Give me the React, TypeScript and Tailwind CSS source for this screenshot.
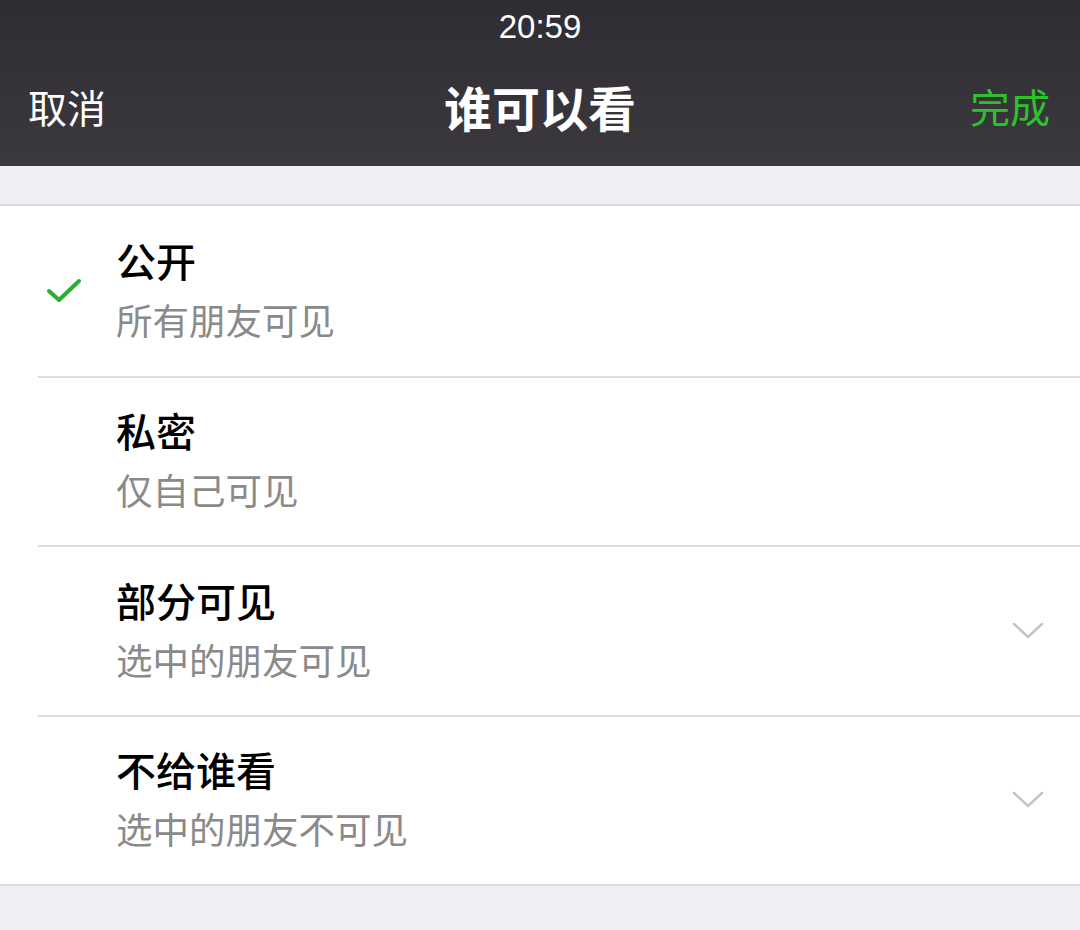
import React from "react"

const options = [
  { title: "公开", desc: "所有朋友可见", checked: true, more: false },
  { title: "私密", desc: "仅自己可见", checked: false, more: false },
  { title: "部分可见", desc: "选中的朋友可见", checked: false, more: true },
  { title: "不给谁看", desc: "选中的朋友不可见", checked: false, more: true },
]

const font = { fontFamily: '"Noto Sans CJK SC", "Noto Sans", sans-serif' }

function Check() {
  return (
    <svg width="36" height="28" viewBox="0 0 36 28" fill="none">
      <path d="M3 14 L13 23 L33 4" stroke="#24b030" strokeWidth="4" strokeLinecap="round" strokeLinejoin="round" />
    </svg>
  )
}

function Chevron() {
  return (
    <svg width="32" height="20" viewBox="0 0 32 20" fill="none">
      <path d="M2 3 L16 16 L30 3" stroke="#c4c4c8" strokeWidth="2.5" strokeLinecap="round" />
    </svg>
  )
}

export default function App() {
  return (
    <div className="w-[1080px] h-[930px] bg-[#efeef3] overflow-hidden" style={font}>
      {/* nav bar */}
      <div className="h-[166px] bg-gradient-to-b from-[#2f2c33] to-[#3b393e] flex flex-col">
        <div className="h-[54px] flex items-center justify-center text-white text-[33px] font-medium" style={{ fontFamily: '"Liberation Sans", Roboto, sans-serif' }}>
          20:59
        </div>
        <div className="flex-1 flex items-center justify-between px-7 pb-2">
          <span className="text-white text-[39px] w-[200px]">取消</span>
          <span className="text-white text-[48px] font-bold">谁可以看</span>
          <span className="text-[#2dc22c] text-[40px] w-[200px] text-right pr-[2px]">完成</span>
        </div>
      </div>

      <div className="h-[38px]" />

      <div className="bg-white border-y-2 border-[#dcdbe0]">
        {options.map((o, i) => (
          <div key={o.title} className="flex">
            <div className={`flex-1 flex items-center h-[169.5px] ml-[38px] ${i > 0 ? "border-t-2 border-[#dedde2]" : ""}`}>
              <div className="w-[78px] flex items-center pl-[8px]">{o.checked && <Check />}</div>
              <div className="flex-1 flex flex-col gap-[12px] pb-[4px]">
                <span className="text-[40px] leading-[50px] font-medium text-black">{o.title}</span>
                <span className="text-[36.5px] leading-[46px] text-[#8a8a8a]">{o.desc}</span>
              </div>
              <div className="w-[80px] flex items-center justify-start pl-[12px]">{o.more && <Chevron />}</div>
            </div>
          </div>
        ))}
      </div>
    </div>
  )
}
